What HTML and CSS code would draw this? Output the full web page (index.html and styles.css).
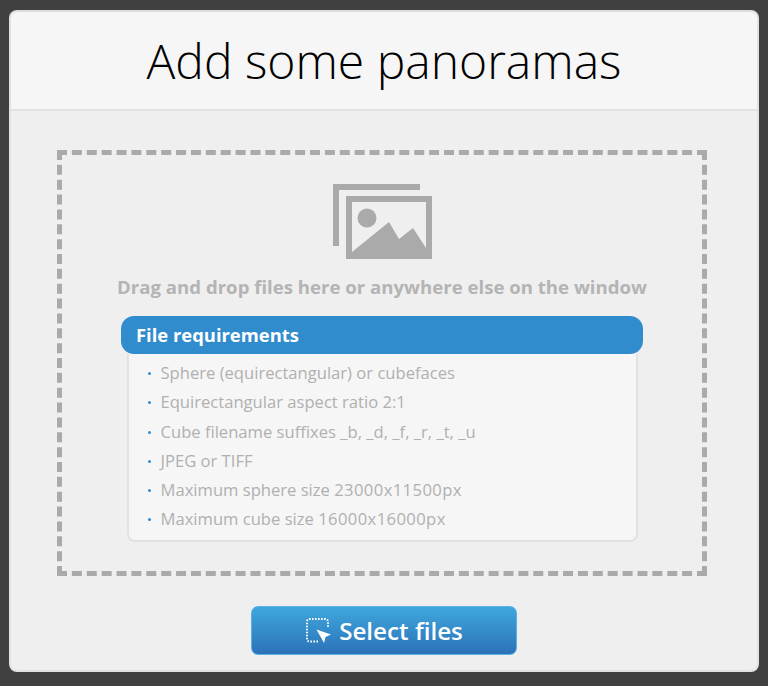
FILE: index.html
```html
<!DOCTYPE html>
<html>
<head>
<meta charset="utf-8">
<title>Add some panoramas</title>
<link rel="stylesheet" href="styles.css">
</head>
<body>
<div class="card">
  <div class="header">
    <h1>Add some panoramas</h1>
  </div>
  <div class="content">
    <div class="dropzone">
      <svg class="pic" width="100" height="76" viewBox="0 0 100 76">
        <path d="M0 0H87V6H6V62H0Z" fill="#aaa"/>
        <path fill-rule="evenodd" d="M13 12H99V75H13ZM19 18V68H93V18Z" fill="#aaa"/>
        <circle cx="34" cy="34" r="9.500" fill="#aaa"/>
        <path d="M19 68L56 38L66 55L80 44L93 64V68Z" fill="#aaa"/>
      </svg>
      <p class="hint">Drag and drop files here or anywhere else on the window</p>
      <div class="reqs">
        <div class="reqs-title">File requirements</div>
        <ul class="reqs-list">
          <li>Sphere (equirectangular) or cubefaces</li>
          <li>Equirectangular aspect ratio 2:1</li>
          <li>Cube filename suffixes _b, _d, _f, _r, _t, _u</li>
          <li>JPEG or TIFF</li>
          <li>Maximum sphere size <span class="size">23000x11500px</span></li>
          <li>Maximum cube size <span class="size">16000x16000px</span></li>
        </ul>
      </div>
    </div>
    <button class="select">
      <svg width="26" height="26" viewBox="0 0 26 26">
        <path d="M13 23.500H5Q2 23.500 2 20.500V4Q2 1 5 1H20Q23 1 23 4V10" fill="none" stroke="#fff" stroke-width="2" stroke-dasharray="1.600 1.400"/>
        <path d="M11.500 11.500L26 16.500L20.500 19L19 25Z" fill="#fff"/>
      </svg>
      Select files
    </button>
  </div>
</div>
</body>
</html>
```

FILE: styles.css
```css
*{
  margin:0px;
  padding:0px;
  box-sizing:border-box;
}
html,body{
  height:100%;
}
body{
  background:#404040;
  padding:10px 9px 14px 9px;
  font-family:"Open Sans", "Liberation Sans", sans-serif;
}
.card{
  height:100%;
  background:#efefef;
  border:2px solid #e2e2e2;
  border-top-color:#dddddd;
  border-radius:8px;
  overflow:hidden;
  display:flex;
  flex-direction:column;
}
.header{
  height:99px;
  flex:none;
  background:#f6f6f6;
  border-bottom:2px solid #e3e3e3;
  display:flex;
  align-items:center;
  justify-content:center;
}
h1{
  font-size:48px;
  font-weight:300;
  color:#000;
  line-height:1;
}
.content{
  flex:1;
  padding:39px 46px 16px 46px;
  display:flex;
  flex-direction:column;
  align-items:center;
}
.dropzone{
  width:650px;
  height:426px;
  flex:none;
  align-self:flex-start;
  border:5px dashed #aaaaaa;
  display:flex;
  flex-direction:column;
  align-items:center;
  padding-top:29px;
}
.pic{
  flex:none;
  margin-left:1px;
}
.hint{
  margin-top:14px;
  font-size:18.600px;
  font-weight:700;
  line-height:26px;
  color:#b4b4b4;
  white-space:nowrap;
}
.reqs{
  width:522px;
  margin-top:16px;
}
.reqs-title{
  height:38px;
  background:#318ccd;
  border-radius:13px;
  color:#fff;
  font-size:18.400px;
  font-weight:700;
  line-height:38px;
  padding-left:15px;
}
.reqs-list{
  width:511px;
  margin:0 auto;
  height:188px;
  background:#f6f6f6;
  border:2px solid #e2e2e2;
  border-top:none;
  border-radius:0 0 8px 8px;
  list-style:none;
  padding-top:4px;
}
.reqs-list li{
  height:29.300px;
  line-height:29.300px;
  font-size:16.600px;
  color:#b0b0b0;
  padding-left:32px;
  position:relative;
}
.reqs-list li:before{
  content:"";
  position:absolute;
  left:19px;
  top:14px;
  width:3px;
  height:3px;
  border-radius:50%;
  background:#318ccd;
}
.size{
  letter-spacing:0.400px;
}
.select{
  width:266px;
  height:49px;
  flex:none;
  margin-top:30px;
  border:1px solid #5cb2e6;
  border-radius:7px;
  background:linear-gradient(#3fa7dd,#2b72b8);
  color:#fff;
  font-family:inherit;
  font-size:24.200px;
  font-weight:600;
  display:flex;
  align-items:center;
  justify-content:center;
  gap:8px;
}
```
